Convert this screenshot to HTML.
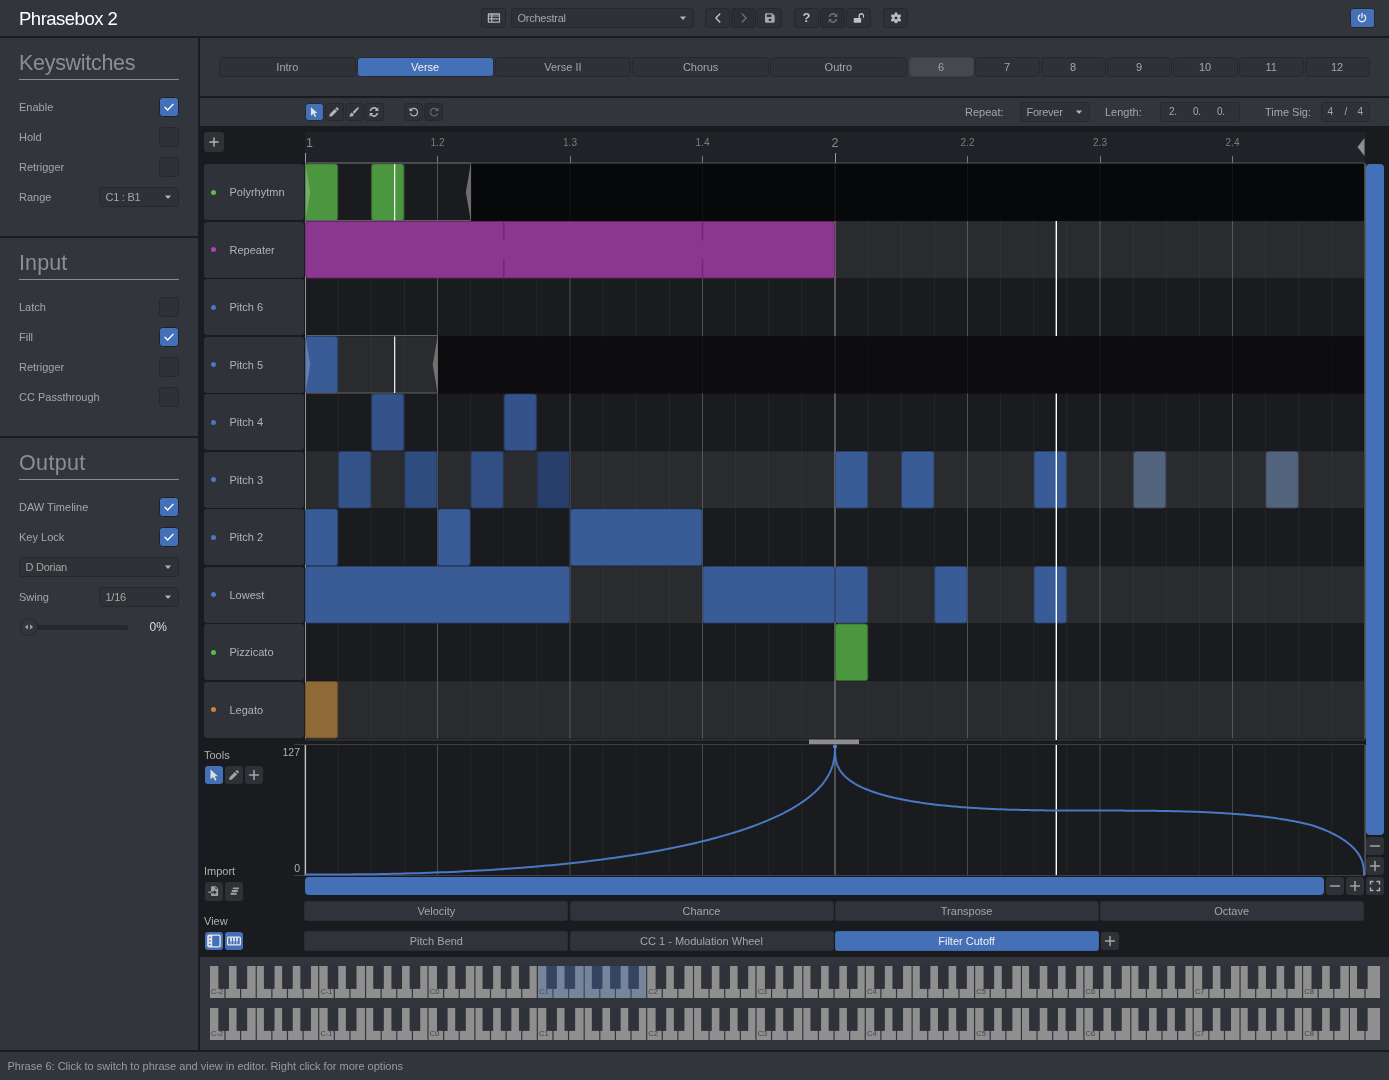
<!DOCTYPE html>
<html lang="en"><head><meta charset="utf-8"><title>Phrasebox 2</title>
<style>
html,body{margin:0;padding:0;}
body{will-change:transform;width:1389px;height:1080px;overflow:hidden;background:#32363c;position:relative;
 font-family:"Liberation Sans",sans-serif;font-size:11px;color:#a6a6a6;}
div,span{position:absolute;box-sizing:border-box;white-space:nowrap;}
svg{position:absolute;}
.btn{background:#2e3136;border:1px solid #25282c;border-radius:3.5px;}
.btn.dis{background:#2a2d32;}
.btn .ic,.sq .ic{left:50%;top:50%;transform:translate(-50%,-50%);}
.blue{background:#4470b8;border-color:#25282c;}
.sq{background:#2e3136;border-radius:3px;}
.ctr{display:flex;align-items:center;justify-content:center;}
.lbl{line-height:20px;height:20px;}
.h1{font-size:21.500px;color:#8e8e8e;line-height:26px;letter-spacing:-0.300px;}
.ul{height:1px;background:#8c8c8c;left:19px;width:160px;}
.cb{width:19.500px;height:19.500px;left:159.300px;background:#2e3136;border:1px solid #25282c;border-radius:3.500px;}
.cb.on{background:#4470b8;border-color:#1f2125;}
.cb .ic{left:50%;top:50%;transform:translate(-50%,-50%);}
.dd{background:#2e3136;border:1px solid #25282c;border-radius:3.500px;line-height:18px;padding-left:5.500px;letter-spacing:-0.250px;}
.dd .ic{right:5px;top:50%;transform:translateY(-50%);}
.tl{background:#2f3238;border-radius:3px;left:204px;width:99.500px;line-height:56px;padding-left:25.500px;color:#b2b2b2;}
.dot{width:5px;height:5px;border-radius:50%;left:6.500px;top:50%;margin-top:-2.500px;}
.note{border-radius:3.500px;}
.ph{width:1.500px;background:#fff;}
.sep{background:#191b1f;}
</style></head><body>

<div class="sep" style="left:0px;top:36px;width:1389px;height:2px;"></div>
<div class="sep" style="left:198px;top:36px;width:2px;height:1016px;"></div>
<div class="sep" style="left:0px;top:236px;width:198px;height:2px;"></div>
<div class="sep" style="left:0px;top:436px;width:198px;height:2px;"></div>
<div class="sep" style="left:200px;top:96px;width:1189px;height:2px;"></div>
<div class="sep" style="left:0px;top:1050px;width:1389px;height:2px;"></div>
<div style="left:200px;top:126px;width:1189px;height:831px;background:#191b1f;"></div>
<div style="left:19px;top:7px;font-size:18.500px;color:#fff;line-height:24px;letter-spacing:-0.500px;">Phrasebox 2</div>
<div class="btn" style="left:481px;top:8px;width:25px;height:19.5px;"><svg class="ic" width="13.5" height="13.5" viewBox="0 0 16 16" fill="#b4b4b4" color="#b4b4b4"><path d="M1.5 2.5h13a1 1 0 0 1 1 1v9a1 1 0 0 1-1 1h-13a1 1 0 0 1-1-1v-9a1 1 0 0 1 1-1zM2 6.2v2h2.6v-2zm4.1 0v2H14v-2zM2 9.7v2.3h2.6V9.7zm4.1 0v2.3H14V9.7zM2 4v.9h2.6V4zm4.1 0v.9H14V4z" fill-rule="evenodd"/></svg></div>
<div class="dd" style="left:511px;top:8px;width:182.500px;height:19.500px;">Orchestral<svg class="ic" width="10" height="10" viewBox="0 0 16 16" fill="#b4b4b4" color="#b4b4b4"><path d="M3 5.5h10L8 11z"/></svg></div>
<div class="btn" style="left:705px;top:8px;width:25px;height:19.5px;"><svg class="ic" width="11.5" height="11.5" viewBox="0 0 16 16" fill="#c4c4c4" color="#c4c4c4"><path d="M10.5 2.5L5 8l5.5 5.5" fill="none" stroke="currentColor" stroke-width="2" stroke-linecap="round" stroke-linejoin="round"/></svg></div>
<div class="btn dis" style="left:731px;top:8px;width:25px;height:19.5px;"><svg class="ic" width="11.5" height="11.5" viewBox="0 0 16 16" fill="#6c6c6c" color="#6c6c6c"><path d="M5.5 2.5L11 8l-5.500 5.5" fill="none" stroke="currentColor" stroke-width="2" stroke-linecap="round" stroke-linejoin="round"/></svg></div>
<div class="btn" style="left:757px;top:8px;width:25px;height:19.5px;"><svg class="ic" width="11.5" height="11.5" viewBox="0 0 16 16" fill="#a8a8a8" color="#a8a8a8"><path d="M2.500 1.500h8.700l3.300 3.300v8.200a1.500 1.500 0 0 1-1.500 1.500h-10.500a1.500 1.500 0 0 1-1.500-1.500v-10a1.500 1.500 0 0 1 1.500-1.500zM3.500 3.300v3.200h6.500v-3.200zM8 8.600a2 2 0 1 0 .001 0z" fill-rule="evenodd"/></svg></div>
<div class="btn" style="left:794px;top:8px;width:25px;height:19.5px;"><span style="left:0;right:0;top:0;line-height:18px;text-align:center;font-weight:bold;font-size:13px;color:#c4c4c4;">?</span></div>
<div class="btn dis" style="left:820px;top:8px;width:25px;height:19.5px;"><svg class="ic" width="11" height="11" viewBox="0 0 16 16" fill="#6c6c6c" color="#6c6c6c"><path d="M14.300 1.200v5.200h-5.200l1.900-1.900a4.200 4.200 0 0 0-7 1.900h-2.400a6.500 6.500 0 0 1 11.050-3.550zM1.700 14.800v-5.200h5.200l-1.900 1.900a4.200 4.200 0 0 0 7-1.900h2.400a6.500 6.500 0 0 1-11.050 3.550z"/></svg></div>
<div class="btn" style="left:846px;top:8px;width:25px;height:19.5px;"><svg class="ic" width="11.5" height="11.5" viewBox="0 0 16 16" fill="#c0c0c0" color="#c0c0c0"><path d="M1.500 8h8.500a1 1 0 0 1 1 1v4.500a1 1 0 0 1-1 1h-8.500a1 1 0 0 1-1-1v-4.500a1 1 0 0 1 1-1z"/><path d="M8.300 8v-2.800a3.100 3.100 0 0 1 6.200 0v1.800" fill="none" stroke="currentColor" stroke-width="1.900" stroke-linecap="round"/></svg></div>
<div class="btn" style="left:883px;top:8px;width:25px;height:19.5px;"><svg class="ic" width="11.5" height="11.5" viewBox="0 0 16 16" fill="#c0c0c0" color="#c0c0c0"><path d="M6.69 0.72 L9.31 0.72 L9.48 2.91 L11.67 4.17 L13.65 3.22 L14.96 5.49 L13.15 6.74 L13.15 9.26 L14.96 10.51 L13.65 12.78 L11.67 11.83 L9.48 13.09 L9.31 15.28 L6.69 15.28 L6.52 13.09 L4.33 11.83 L2.35 12.78 L1.04 10.51 L2.85 9.26 L2.85 6.74 L1.04 5.49 L2.35 3.22 L4.33 4.17 L6.52 2.91ZM8 5.600a2.400 2.400 0 1 0 .001 0z" fill-rule="evenodd" stroke="currentColor" stroke-width="0.8" stroke-linejoin="round"/></svg></div>
<div class="btn blue" style="left:1350.2px;top:8px;width:24.5px;height:19.8px;border-radius:3px;"><svg class="ic" width="11" height="11" viewBox="0 0 16 16" fill="#e6e6e6" color="#e6e6e6"><path d="M8 1.500v6" fill="none" stroke="currentColor" stroke-width="2" stroke-linecap="round"/><path d="M4.700 3.800a5.400 5.400 0 1 0 6.600 0" fill="none" stroke="currentColor" stroke-width="1.900" stroke-linecap="round"/></svg></div>
<div class="h1" style="left:19px;top:49.5px;letter-spacing:-0.3px;">Keyswitches</div>
<div class="ul" style="top:79px;"></div>
<div class="lbl" style="left:19px;top:97px;">Enable</div>
<div class="cb on" style="top:97px;"><svg class="ic" width="13" height="13" viewBox="0 0 16 16" fill="#b4b4b4" color="#b4b4b4"><path d="M3 8.300l3.300 3.400 6.800-7" fill="none" stroke="#fff" stroke-width="1.600" stroke-linecap="round" stroke-linejoin="round"/></svg></div>
<div class="lbl" style="left:19px;top:127px;">Hold</div>
<div class="cb" style="top:127px;"></div>
<div class="lbl" style="left:19px;top:157px;">Retrigger</div>
<div class="cb" style="top:157px;"></div>
<div class="lbl" style="left:19px;top:187px;">Range</div>
<div class="dd" style="left:99px;top:187px;width:79.500px;height:19.500px;">C1 : B1<svg class="ic" width="10" height="10" viewBox="0 0 16 16" fill="#b4b4b4" color="#b4b4b4"><path d="M3 5.5h10L8 11z"/></svg></div>
<div class="h1" style="left:19px;top:249.5px;letter-spacing:0.1px;">Input</div>
<div class="ul" style="top:279px;"></div>
<div class="lbl" style="left:19px;top:297px;">Latch</div>
<div class="cb" style="top:297px;"></div>
<div class="lbl" style="left:19px;top:327px;">Fill</div>
<div class="cb on" style="top:327px;"><svg class="ic" width="13" height="13" viewBox="0 0 16 16" fill="#b4b4b4" color="#b4b4b4"><path d="M3 8.300l3.300 3.400 6.800-7" fill="none" stroke="#fff" stroke-width="1.600" stroke-linecap="round" stroke-linejoin="round"/></svg></div>
<div class="lbl" style="left:19px;top:357px;">Retrigger</div>
<div class="cb" style="top:357px;"></div>
<div class="lbl" style="left:19px;top:387px;">CC Passthrough</div>
<div class="cb" style="top:387px;"></div>
<div class="h1" style="left:19px;top:449.5px;letter-spacing:0.35px;">Output</div>
<div class="ul" style="top:479px;"></div>
<div class="lbl" style="left:19px;top:497px;">DAW Timeline</div>
<div class="cb on" style="top:497px;"><svg class="ic" width="13" height="13" viewBox="0 0 16 16" fill="#b4b4b4" color="#b4b4b4"><path d="M3 8.300l3.300 3.400 6.800-7" fill="none" stroke="#fff" stroke-width="1.600" stroke-linecap="round" stroke-linejoin="round"/></svg></div>
<div class="lbl" style="left:19px;top:527px;">Key Lock</div>
<div class="cb on" style="top:527px;"><svg class="ic" width="13" height="13" viewBox="0 0 16 16" fill="#b4b4b4" color="#b4b4b4"><path d="M3 8.300l3.300 3.400 6.800-7" fill="none" stroke="#fff" stroke-width="1.600" stroke-linecap="round" stroke-linejoin="round"/></svg></div>
<div class="dd" style="left:19px;top:557px;width:159.500px;height:19.500px;">D Dorian<svg class="ic" width="10" height="10" viewBox="0 0 16 16" fill="#b4b4b4" color="#b4b4b4"><path d="M3 5.5h10L8 11z"/></svg></div>
<div class="lbl" style="left:19px;top:587px;">Swing</div>
<div class="dd" style="left:99px;top:587px;width:79.500px;height:19.500px;">1/16<svg class="ic" width="10" height="10" viewBox="0 0 16 16" fill="#b4b4b4" color="#b4b4b4"><path d="M3 5.5h10L8 11z"/></svg></div>
<div style="left:22px;top:624.5px;width:106px;height:5.5px;background:#25282c;border-radius:3px;"></div>
<div style="left:20px;top:618px;width:17.500px;height:17.500px;border-radius:50%;background:#32363c;border:1px solid #25282c;"><svg class="ic" style="left:50%;top:50%;transform:translate(-50%,-50%);" width="11" height="11" viewBox="0 0 16 16" fill="#a0a0a0" color="#a0a0a0"><path d="M6.500 4.500v7l-4.500-3.500zM9.500 4.500v7l4.500-3.500z"/></svg></div>
<div class="lbl" style="left:149.500px;top:617px;font-size:12px;color:#dcdcdc;">0%</div>
<div class="btn ctr" style="left:219.00px;top:57px;width:136.750px;height:19.500px;">Intro</div>
<div class="btn ctr" style="left:356.75px;top:57px;width:136.750px;height:19.500px;background:#4470b8;border-color:#25282c;color:#f0f0f0;">Verse</div>
<div class="btn ctr" style="left:494.50px;top:57px;width:136.750px;height:19.500px;">Verse II</div>
<div class="btn ctr" style="left:632.25px;top:57px;width:136.750px;height:19.500px;">Chorus</div>
<div class="btn ctr" style="left:770.00px;top:57px;width:136.750px;height:19.500px;">Outro</div>
<div class="btn ctr" style="left:908.5px;top:57px;width:65.200px;height:19.500px;background:#45484e;border-color:#3a3d42;">6</div>
<div class="btn ctr" style="left:974.5px;top:57px;width:65.200px;height:19.500px;">7</div>
<div class="btn ctr" style="left:1040.5px;top:57px;width:65.200px;height:19.500px;">8</div>
<div class="btn ctr" style="left:1106.5px;top:57px;width:65.200px;height:19.500px;">9</div>
<div class="btn ctr" style="left:1172.5px;top:57px;width:65.200px;height:19.500px;">10</div>
<div class="btn ctr" style="left:1238.5px;top:57px;width:65.200px;height:19.500px;">11</div>
<div class="btn ctr" style="left:1304.5px;top:57px;width:65.200px;height:19.500px;">12</div>
<div class="btn blue" style="left:304.5px;top:102.5px;width:19px;height:18.5px;"><svg class="ic" width="11" height="11" viewBox="0 0 16 16" fill="#e4e4e4" color="#e4e4e4"><path d="M3.500 1l9.500 8.600h-4.100l2.300 4.700-1.900.9-2.300-4.800-3.500 3z"/></svg></div>
<div class="btn" style="left:324.5px;top:102.5px;width:19px;height:18.5px;"><svg class="ic" width="11" height="11" viewBox="0 0 16 16" fill="#b4b4b4" color="#b4b4b4"><path d="M11.300 1.600a1.200 1.200 0 0 1 1.700 0l1.400 1.400a1.200 1.200 0 0 1 0 1.700l-1.300 1.300-3.100-3.100zM9.200 3.700l3.100 3.100-7.300 7.300-3.900.8.800-3.900z"/></svg></div>
<div class="btn" style="left:344.5px;top:102.5px;width:19px;height:18.5px;"><svg class="ic" width="11" height="11" viewBox="0 0 16 16" fill="#b4b4b4" color="#b4b4b4"><path d="M14.800 1.200c.6.600.300 1.500-.2 2.100l-6.200 7.200-2.400-2.400 6.900-6.500c.6-.6 1.400-.9 1.900-.4zM5.200 9l2.300 2.300c.1 2-1.500 3.300-3.300 3.300-1.300 0-2.500-.4-3.400-1.300 1.400-.1 1.700-.9 1.800-2 .1-1.400 1.200-2.400 2.600-2.300z"/></svg></div>
<div class="btn" style="left:364.5px;top:102.5px;width:19px;height:18.5px;"><svg class="ic" width="11" height="11" viewBox="0 0 16 16" fill="#b4b4b4" color="#b4b4b4"><path d="M14.300 1.200v5.200h-5.200l1.900-1.900a4.200 4.200 0 0 0-7 1.900h-2.400a6.500 6.500 0 0 1 11.050-3.550zM1.700 14.800v-5.200h5.200l-1.900 1.900a4.200 4.200 0 0 0 7-1.900h2.400a6.500 6.500 0 0 1-11.050 3.550z"/></svg></div>
<div class="btn" style="left:404px;top:102.5px;width:19px;height:18.5px;"><svg class="ic" width="11" height="11" viewBox="0 0 16 16" fill="#b4b4b4" color="#b4b4b4"><path d="M3.300 5.200a5.400 5.400 0 1 1-.4 5.300" fill="none" stroke="currentColor" stroke-width="1.800" stroke-linecap="round"/><path d="M1.200 1.800l.3 5.200 5.200-.4z"/></svg></div>
<div class="btn dis" style="left:424px;top:102.5px;width:19px;height:18.5px;"><svg class="ic" width="11" height="11" viewBox="0 0 16 16" fill="#666" color="#666"><path d="M12.700 5.200a5.400 5.400 0 1 0 .4 5.300" fill="none" stroke="currentColor" stroke-width="1.800" stroke-linecap="round"/><path d="M14.800 1.800l-.3 5.200-5.200-.4z"/></svg></div>
<div class="lbl" style="left:965px;top:102px;">Repeat:</div>
<div class="dd" style="left:1020px;top:102px;width:70px;height:19.500px;">Forever<svg class="ic" width="10" height="10" viewBox="0 0 16 16" fill="#b4b4b4" color="#b4b4b4"><path d="M3 5.5h10L8 11z"/></svg></div>
<div class="lbl" style="left:1105px;top:102px;">Length:</div>
<div class="dd" style="left:1160px;top:102px;width:79.500px;height:19.500px;font-size:10px;padding:0;"><span style="left:8px;top:0;">2.</span><span style="left:32px;top:0;">0.</span><span style="left:56px;top:0;">0.</span></div>
<div class="lbl" style="left:1265px;top:102px;">Time Sig:</div>
<div class="dd" style="left:1320.500px;top:102px;width:49px;height:19.500px;font-size:10px;padding:0;"><span style="left:6px;top:0;">4</span><span style="left:23px;top:0;">/</span><span style="left:36px;top:0;">4</span></div>
<div class="sq" style="left:204px;top:132px;width:19.5px;height:19.5px;"><svg class="ic" width="12" height="12" viewBox="0 0 16 16" fill="#b4b4b4" color="#b4b4b4"><path d="M8 2.500v11M2.500 8h11" fill="none" stroke="currentColor" stroke-width="1.900" stroke-linecap="round"/></svg></div>
<div style="left:305px;top:132px;width:1059.5px;height:31px;background:#1f2226;"></div>
<div style="left:305.0px;top:153px;width:1px;height:10px;background:#9a9a9a;"></div>
<div style="left:306px;top:135px;line-height:16px;font-size:12.500px;color:#8c8c8c;">1</div>
<div style="left:437.0px;top:156px;width:1px;height:7px;background:#7a7a7a;"></div>
<div style="left:417.5px;width:40px;text-align:center;top:135px;line-height:16px;font-size:10px;color:#7c7c7c;">1.2</div>
<div style="left:569.5px;top:156px;width:1px;height:7px;background:#7a7a7a;"></div>
<div style="left:550.0px;width:40px;text-align:center;top:135px;line-height:16px;font-size:10px;color:#7c7c7c;">1.3</div>
<div style="left:702.0px;top:156px;width:1px;height:7px;background:#7a7a7a;"></div>
<div style="left:682.5px;width:40px;text-align:center;top:135px;line-height:16px;font-size:10px;color:#7c7c7c;">1.4</div>
<div style="left:834.5px;top:153px;width:1px;height:10px;background:#9a9a9a;"></div>
<div style="left:815.0px;width:40px;text-align:center;top:135px;line-height:16px;font-size:12.500px;color:#8c8c8c;">2</div>
<div style="left:967.0px;top:156px;width:1px;height:7px;background:#7a7a7a;"></div>
<div style="left:947.5px;width:40px;text-align:center;top:135px;line-height:16px;font-size:10px;color:#7c7c7c;">2.2</div>
<div style="left:1099.5px;top:156px;width:1px;height:7px;background:#7a7a7a;"></div>
<div style="left:1080.0px;width:40px;text-align:center;top:135px;line-height:16px;font-size:10px;color:#7c7c7c;">2.3</div>
<div style="left:1232.0px;top:156px;width:1px;height:7px;background:#7a7a7a;"></div>
<div style="left:1212.5px;width:40px;text-align:center;top:135px;line-height:16px;font-size:10px;color:#7c7c7c;">2.4</div>
<svg style="left:1357px;top:138px;" width="8" height="18" viewBox="0 0 8 18"><path d="M7.500 0v18L0.500 9z" fill="#8e8e8e"/></svg>
<svg style="left:0;top:0;" width="1389" height="960" viewBox="0 0 1389 960" shape-rendering="auto"><rect x="305.0" y="163.50" width="1059.5" height="57.50" fill="#191b1f"/><rect x="305.0" y="221.00" width="1059.5" height="57.50" fill="#2a2b2f"/><rect x="305.0" y="278.50" width="1059.5" height="57.50" fill="#191b1f"/><rect x="305.0" y="336.00" width="1059.5" height="57.50" fill="#2a2b2f"/><rect x="305.0" y="393.50" width="1059.5" height="57.50" fill="#191b1f"/><rect x="305.0" y="451.00" width="1059.5" height="57.50" fill="#2a2b2f"/><rect x="305.0" y="508.50" width="1059.5" height="57.50" fill="#191b1f"/><rect x="305.0" y="566.00" width="1059.5" height="57.50" fill="#2a2b2f"/><rect x="305.0" y="623.50" width="1059.5" height="57.50" fill="#191b1f"/><rect x="305.0" y="681.00" width="1059.5" height="57.50" fill="#2a2b2f"/><rect x="470.62" y="163.50" width="893.88" height="57.5" fill="#07080a"/><rect x="437.50" y="336.00" width="927.00" height="57.5" fill="#0d0e10"/><rect x="305.0" y="220.50" width="1059.5" height="1" fill="#1a1c20" opacity="0.55"/><rect x="305.0" y="278.00" width="1059.5" height="1" fill="#1a1c20" opacity="0.55"/><rect x="305.0" y="335.50" width="1059.5" height="1" fill="#1a1c20" opacity="0.55"/><rect x="305.0" y="393.00" width="1059.5" height="1" fill="#1a1c20" opacity="0.55"/><rect x="305.0" y="450.50" width="1059.5" height="1" fill="#1a1c20" opacity="0.55"/><rect x="305.0" y="508.00" width="1059.5" height="1" fill="#1a1c20" opacity="0.55"/><rect x="305.0" y="565.50" width="1059.5" height="1" fill="#1a1c20" opacity="0.55"/><rect x="305.0" y="623.00" width="1059.5" height="1" fill="#1a1c20" opacity="0.55"/><rect x="305.0" y="680.50" width="1059.5" height="1" fill="#1a1c20" opacity="0.55"/><rect x="305.00" y="163.5" width="1" height="575.0" fill="#b4b4b4" opacity="0.8"/><rect x="304.50" y="745" width="1" height="130" fill="#b4b4b4" opacity="0.72"/><rect x="337.62" y="163.5" width="1" height="575.0" fill="#8a8a8a" opacity="0.11"/><rect x="337.62" y="745" width="1" height="130" fill="#8a8a8a" opacity="0.10"/><rect x="370.75" y="163.5" width="1" height="575.0" fill="#8a8a8a" opacity="0.11"/><rect x="370.75" y="745" width="1" height="130" fill="#8a8a8a" opacity="0.10"/><rect x="403.88" y="163.5" width="1" height="575.0" fill="#8a8a8a" opacity="0.11"/><rect x="403.88" y="745" width="1" height="130" fill="#8a8a8a" opacity="0.10"/><rect x="437.00" y="163.5" width="1" height="575.0" fill="#8c8c8c" opacity="0.47"/><rect x="437.00" y="745" width="1" height="130" fill="#8c8c8c" opacity="0.42"/><rect x="470.12" y="163.5" width="1" height="575.0" fill="#8a8a8a" opacity="0.11"/><rect x="470.12" y="745" width="1" height="130" fill="#8a8a8a" opacity="0.10"/><rect x="503.25" y="163.5" width="1" height="575.0" fill="#8a8a8a" opacity="0.11"/><rect x="503.25" y="745" width="1" height="130" fill="#8a8a8a" opacity="0.10"/><rect x="536.38" y="163.5" width="1" height="575.0" fill="#8a8a8a" opacity="0.11"/><rect x="536.38" y="745" width="1" height="130" fill="#8a8a8a" opacity="0.10"/><rect x="569.50" y="163.5" width="1" height="575.0" fill="#8c8c8c" opacity="0.47"/><rect x="569.50" y="745" width="1" height="130" fill="#8c8c8c" opacity="0.42"/><rect x="602.62" y="163.5" width="1" height="575.0" fill="#8a8a8a" opacity="0.11"/><rect x="602.62" y="745" width="1" height="130" fill="#8a8a8a" opacity="0.10"/><rect x="635.75" y="163.5" width="1" height="575.0" fill="#8a8a8a" opacity="0.11"/><rect x="635.75" y="745" width="1" height="130" fill="#8a8a8a" opacity="0.10"/><rect x="668.88" y="163.5" width="1" height="575.0" fill="#8a8a8a" opacity="0.11"/><rect x="668.88" y="745" width="1" height="130" fill="#8a8a8a" opacity="0.10"/><rect x="702.00" y="163.5" width="1" height="575.0" fill="#8c8c8c" opacity="0.47"/><rect x="702.00" y="745" width="1" height="130" fill="#8c8c8c" opacity="0.42"/><rect x="735.12" y="163.5" width="1" height="575.0" fill="#8a8a8a" opacity="0.11"/><rect x="735.12" y="745" width="1" height="130" fill="#8a8a8a" opacity="0.10"/><rect x="768.25" y="163.5" width="1" height="575.0" fill="#8a8a8a" opacity="0.11"/><rect x="768.25" y="745" width="1" height="130" fill="#8a8a8a" opacity="0.10"/><rect x="801.38" y="163.5" width="1" height="575.0" fill="#8a8a8a" opacity="0.11"/><rect x="801.38" y="745" width="1" height="130" fill="#8a8a8a" opacity="0.10"/><rect x="834.50" y="163.5" width="1" height="575.0" fill="#b4b4b4" opacity="0.8"/><rect x="834.50" y="745" width="1" height="130" fill="#b4b4b4" opacity="0.72"/><rect x="867.62" y="163.5" width="1" height="575.0" fill="#8a8a8a" opacity="0.11"/><rect x="867.62" y="745" width="1" height="130" fill="#8a8a8a" opacity="0.10"/><rect x="900.75" y="163.5" width="1" height="575.0" fill="#8a8a8a" opacity="0.11"/><rect x="900.75" y="745" width="1" height="130" fill="#8a8a8a" opacity="0.10"/><rect x="933.88" y="163.5" width="1" height="575.0" fill="#8a8a8a" opacity="0.11"/><rect x="933.88" y="745" width="1" height="130" fill="#8a8a8a" opacity="0.10"/><rect x="967.00" y="163.5" width="1" height="575.0" fill="#8c8c8c" opacity="0.47"/><rect x="967.00" y="745" width="1" height="130" fill="#8c8c8c" opacity="0.42"/><rect x="1000.12" y="163.5" width="1" height="575.0" fill="#8a8a8a" opacity="0.11"/><rect x="1000.12" y="745" width="1" height="130" fill="#8a8a8a" opacity="0.10"/><rect x="1033.25" y="163.5" width="1" height="575.0" fill="#8a8a8a" opacity="0.11"/><rect x="1033.25" y="745" width="1" height="130" fill="#8a8a8a" opacity="0.10"/><rect x="1066.38" y="163.5" width="1" height="575.0" fill="#8a8a8a" opacity="0.11"/><rect x="1066.38" y="745" width="1" height="130" fill="#8a8a8a" opacity="0.10"/><rect x="1099.50" y="163.5" width="1" height="575.0" fill="#8c8c8c" opacity="0.47"/><rect x="1099.50" y="745" width="1" height="130" fill="#8c8c8c" opacity="0.42"/><rect x="1132.62" y="163.5" width="1" height="575.0" fill="#8a8a8a" opacity="0.11"/><rect x="1132.62" y="745" width="1" height="130" fill="#8a8a8a" opacity="0.10"/><rect x="1165.75" y="163.5" width="1" height="575.0" fill="#8a8a8a" opacity="0.11"/><rect x="1165.75" y="745" width="1" height="130" fill="#8a8a8a" opacity="0.10"/><rect x="1198.88" y="163.5" width="1" height="575.0" fill="#8a8a8a" opacity="0.11"/><rect x="1198.88" y="745" width="1" height="130" fill="#8a8a8a" opacity="0.10"/><rect x="1232.00" y="163.5" width="1" height="575.0" fill="#8c8c8c" opacity="0.47"/><rect x="1232.00" y="745" width="1" height="130" fill="#8c8c8c" opacity="0.42"/><rect x="1265.12" y="163.5" width="1" height="575.0" fill="#8a8a8a" opacity="0.11"/><rect x="1265.12" y="745" width="1" height="130" fill="#8a8a8a" opacity="0.10"/><rect x="1298.25" y="163.5" width="1" height="575.0" fill="#8a8a8a" opacity="0.11"/><rect x="1298.25" y="745" width="1" height="130" fill="#8a8a8a" opacity="0.10"/><rect x="1331.38" y="163.5" width="1" height="575.0" fill="#8a8a8a" opacity="0.11"/><rect x="1331.38" y="745" width="1" height="130" fill="#8a8a8a" opacity="0.10"/><rect x="1364.50" y="163.5" width="1" height="575.0" fill="#b4b4b4" opacity="0.8"/><rect x="1364.50" y="745" width="1" height="130" fill="#b4b4b4" opacity="0.72"/><rect x="471.23" y="163.50" width="892.88" height="57.5" fill="#07080a" opacity="0.82"/><rect x="438.10" y="336.00" width="926.00" height="57.5" fill="#0d0e10" opacity="0.82"/><rect x="305.40" y="164.00" width="32.23" height="56.50" rx="2.6" fill="#4d9640" stroke="#376c2e" stroke-width="0.8" opacity="1.0"/><rect x="371.65" y="164.00" width="32.23" height="56.50" rx="2.6" fill="#4d9640" stroke="#376c2e" stroke-width="0.8" opacity="1.0"/><rect x="305.40" y="221.50" width="529.10" height="56.50" rx="2.6" fill="#8b368f" stroke="#642666" stroke-width="0.8" opacity="1.0"/><rect x="305.40" y="336.50" width="32.23" height="56.50" rx="2.6" fill="#3a5c96" stroke="#29426c" stroke-width="0.8" opacity="1.0"/><rect x="371.65" y="394.00" width="32.23" height="56.50" rx="2.6" fill="#34538a" stroke="#253b63" stroke-width="0.8" opacity="1.0"/><rect x="504.15" y="394.00" width="32.23" height="56.50" rx="2.6" fill="#34538a" stroke="#253b63" stroke-width="0.8" opacity="1.0"/><rect x="338.52" y="451.50" width="32.23" height="56.50" rx="2.6" fill="#335389" stroke="#243b62" stroke-width="0.8" opacity="1.0"/><rect x="404.77" y="451.50" width="32.23" height="56.50" rx="2.6" fill="#2e4c7e" stroke="#21365a" stroke-width="0.8" opacity="1.0"/><rect x="471.02" y="451.50" width="32.23" height="56.50" rx="2.6" fill="#314f82" stroke="#23385d" stroke-width="0.8" opacity="1.0"/><rect x="537.27" y="451.50" width="32.23" height="56.50" rx="2.6" fill="#283f6b" stroke="#1c2d4d" stroke-width="0.8" opacity="1.0"/><rect x="835.40" y="451.50" width="32.23" height="56.50" rx="2.6" fill="#3a5c96" stroke="#29426c" stroke-width="0.8" opacity="1.0"/><rect x="901.65" y="451.50" width="32.23" height="56.50" rx="2.6" fill="#3a5c96" stroke="#29426c" stroke-width="0.8" opacity="1.0"/><rect x="1034.15" y="451.50" width="32.23" height="56.50" rx="2.6" fill="#3a5c96" stroke="#29426c" stroke-width="0.8" opacity="1.0"/><rect x="1133.53" y="451.50" width="32.23" height="56.50" rx="2.6" fill="#52637d" stroke="#3b475a" stroke-width="0.8" opacity="1.0"/><rect x="1266.03" y="451.50" width="32.23" height="56.50" rx="2.6" fill="#52637d" stroke="#3b475a" stroke-width="0.8" opacity="1.0"/><rect x="305.40" y="509.00" width="32.23" height="56.50" rx="2.6" fill="#3a5c96" stroke="#29426c" stroke-width="0.8" opacity="1.0"/><rect x="437.90" y="509.00" width="32.23" height="56.50" rx="2.6" fill="#3a5c96" stroke="#29426c" stroke-width="0.8" opacity="1.0"/><rect x="570.40" y="509.00" width="131.60" height="56.50" rx="2.6" fill="#3a5c96" stroke="#29426c" stroke-width="0.8" opacity="1.0"/><rect x="305.40" y="566.50" width="264.10" height="56.50" rx="2.6" fill="#3a5c96" stroke="#29426c" stroke-width="0.8" opacity="1.0"/><rect x="702.90" y="566.50" width="131.60" height="56.50" rx="2.6" fill="#3a5c96" stroke="#29426c" stroke-width="0.8" opacity="1.0"/><rect x="835.40" y="566.50" width="32.23" height="56.50" rx="2.6" fill="#3a5c96" stroke="#29426c" stroke-width="0.8" opacity="1.0"/><rect x="934.77" y="566.50" width="32.23" height="56.50" rx="2.6" fill="#3a5c96" stroke="#29426c" stroke-width="0.8" opacity="1.0"/><rect x="1034.15" y="566.50" width="32.23" height="56.50" rx="2.6" fill="#3a5c96" stroke="#29426c" stroke-width="0.8" opacity="1.0"/><rect x="835.40" y="624.00" width="32.23" height="56.50" rx="2.6" fill="#4d9640" stroke="#376c2e" stroke-width="0.8" opacity="1.0"/><rect x="305.40" y="681.50" width="32.23" height="56.50" rx="2.6" fill="#8f6a36" stroke="#664c26" stroke-width="0.8" opacity="1.0"/><rect x="503.00" y="222.00" width="1.500" height="18.5" fill="#6f2a73"/><rect x="503.00" y="259.00" width="1.500" height="18.5" fill="#6f2a73"/><rect x="701.75" y="222.00" width="1.500" height="18.5" fill="#6f2a73"/><rect x="701.75" y="259.00" width="1.500" height="18.5" fill="#6f2a73"/><path d="M305.00 163.00 H470.62 V220.50 H305.00" fill="none" stroke="#606060" stroke-width="1"/><path d="M305.50 164.50 L310.20 192.25 L305.50 220.00Z" fill="#fff" opacity="0.22"/><path d="M470.62 164.50 L465.82 192.25 L470.62 220.00Z" fill="#8a8a8a" opacity="0.75"/><rect x="394.1" y="164.00" width="1.150" height="56.50" fill="#fff"/><path d="M305.00 335.50 H437.50 V393.00 H305.00" fill="none" stroke="#606060" stroke-width="1"/><path d="M305.50 337.00 L310.20 364.75 L305.50 392.50Z" fill="#fff" opacity="0.22"/><path d="M437.50 337.00 L432.70 364.75 L437.50 392.50Z" fill="#8a8a8a" opacity="0.75"/><rect x="394.1" y="336.50" width="1.150" height="56.50" fill="#fff"/><rect x="305.0" y="162.5" width="1059.5" height="1" fill="#55575a"/><rect x="1364.0" y="163" width="1" height="577" fill="#484a4e"/><rect x="305.0" y="739.5" width="1059.5" height="1" fill="#3c3e42"/><rect x="1055.6" y="221.00" width="1.400" height="115.00" fill="#fff"/><rect x="1055.6" y="393.50" width="1.400" height="346.50" fill="#fff"/><rect x="1055.6" y="744.50" width="1.400" height="130.50" fill="#fff"/><rect x="294" y="744" width="1071" height="1" fill="#3c3e42"/><rect x="294" y="875" width="1071" height="1" fill="#3c3e42"/><rect x="1364" y="744" width="1" height="132" fill="#3c3e42"/><rect x="305" y="745" width="1.100" height="130" fill="#c0c0c0"/><rect x="809" y="739.5" width="50" height="4.500" fill="#8e8e8e"/><path d="M305.00 874.60 L311.60 874.60 L318.17 874.59 L324.69 874.58 L331.17 874.55 L337.61 874.52 L344.00 874.48 L350.36 874.43 L356.68 874.37 L362.95 874.30 L369.18 874.22 L375.37 874.13 L381.52 874.02 L387.63 873.91 L393.69 873.78 L399.72 873.65 L405.70 873.50 L411.64 873.34 L417.54 873.17 L423.40 872.98 L429.22 872.79 L434.99 872.58 L440.73 872.36 L446.42 872.13 L452.08 871.89 L457.69 871.64 L463.25 871.37 L468.78 871.10 L474.27 870.81 L479.71 870.51 L485.12 870.20 L490.48 869.88 L495.80 869.54 L501.08 869.20 L506.32 868.84 L511.51 868.48 L516.67 868.10 L521.78 867.71 L526.85 867.31 L531.89 866.89 L536.88 866.47 L541.82 866.04 L546.73 865.59 L551.59 865.14 L556.42 864.67 L561.20 864.19 L565.94 863.71 L570.64 863.21 L575.30 862.70 L579.92 862.18 L584.49 861.65 L589.03 861.12 L593.52 860.57 L597.97 860.01 L602.38 859.44 L606.75 858.86 L611.07 858.27 L615.36 857.67 L619.60 857.06 L623.81 856.44 L627.97 855.81 L632.09 855.17 L636.17 854.53 L640.20 853.87 L644.20 853.20 L648.15 852.53 L652.07 851.84 L655.94 851.15 L659.77 850.44 L663.56 849.73 L667.30 849.01 L671.01 848.28 L674.67 847.54 L678.30 846.79 L681.88 846.03 L685.42 845.27 L688.92 844.49 L692.38 843.71 L695.79 842.92 L699.17 842.12 L702.50 841.31 L705.79 840.49 L709.04 839.66 L712.25 838.83 L715.42 837.98 L718.54 837.13 L721.63 836.27 L724.67 835.41 L727.68 834.53 L730.64 833.65 L733.55 832.76 L736.43 831.86 L739.27 830.95 L742.06 830.03 L744.82 829.11 L747.53 828.18 L750.20 827.24 L752.83 826.29 L755.42 825.34 L757.96 824.37 L760.47 823.40 L762.93 822.43 L765.35 821.44 L767.74 820.45 L770.08 819.45 L772.37 818.44 L774.63 817.42 L776.84 816.40 L779.02 815.37 L781.15 814.33 L783.24 813.28 L785.29 812.23 L787.30 811.16 L789.27 810.09 L791.19 809.02 L793.08 807.93 L794.92 806.84 L796.72 805.74 L798.48 804.63 L800.20 803.52 L801.88 802.39 L803.51 801.26 L805.10 800.12 L806.66 798.97 L808.17 797.82 L809.64 796.66 L811.07 795.48 L812.45 794.30 L813.80 793.12 L815.10 791.92 L816.37 790.71 L817.59 789.50 L818.77 788.27 L819.91 787.04 L821.00 785.80 L822.06 784.55 L823.08 783.29 L824.05 782.01 L824.98 780.73 L825.87 779.44 L826.72 778.13 L827.53 776.82 L828.29 775.49 L829.02 774.14 L829.70 772.79 L830.34 771.42 L830.94 770.03 L831.50 768.63 L832.02 767.21 L832.49 765.78 L832.93 764.32 L833.32 762.84 L833.67 761.33 L833.99 759.79 L834.25 758.22 L834.48 756.61 L834.67 754.95 L834.81 753.22 L834.92 751.41 L834.98 749.44 L835.00 747.00 L835.01 749.77 L835.04 751.47 L835.09 752.91 L835.17 754.21 L835.26 755.41 L835.37 756.53 L835.51 757.60 L835.66 758.62 L835.84 759.60 L836.03 760.55 L836.25 761.47 L836.49 762.36 L836.75 763.22 L837.03 764.07 L837.32 764.89 L837.64 765.70 L837.99 766.49 L838.35 767.26 L838.73 768.02 L839.13 768.77 L839.56 769.50 L840.00 770.22 L840.47 770.93 L840.95 771.63 L841.46 772.32 L841.98 773.00 L842.53 773.66 L843.10 774.32 L843.69 774.97 L844.30 775.61 L844.93 776.24 L845.58 776.86 L846.25 777.48 L846.94 778.08 L847.66 778.68 L848.39 779.28 L849.14 779.86 L849.92 780.44 L850.72 781.01 L851.53 781.57 L852.37 782.13 L853.23 782.68 L854.10 783.22 L855.00 783.76 L855.92 784.29 L856.86 784.81 L857.82 785.33 L858.80 785.84 L859.81 786.35 L860.83 786.85 L861.87 787.34 L862.94 787.83 L864.02 788.31 L865.13 788.79 L866.25 789.26 L867.40 789.72 L868.57 790.18 L869.76 790.64 L870.97 791.09 L872.20 791.53 L873.45 791.97 L874.72 792.40 L876.01 792.82 L877.32 793.24 L878.65 793.66 L880.01 794.07 L881.38 794.48 L882.78 794.87 L884.19 795.27 L885.63 795.66 L887.08 796.04 L888.56 796.42 L890.06 796.79 L891.58 797.16 L893.12 797.52 L894.68 797.88 L896.26 798.23 L897.86 798.58 L899.48 798.92 L901.12 799.26 L902.79 799.59 L904.47 799.92 L906.18 800.24 L907.90 800.56 L909.65 800.87 L911.42 801.17 L913.20 801.47 L915.01 801.77 L916.84 802.06 L918.69 802.34 L920.56 802.62 L922.45 802.90 L924.36 803.17 L926.29 803.43 L928.25 803.69 L930.22 803.95 L932.21 804.20 L934.23 804.44 L936.26 804.68 L938.32 804.92 L940.40 805.14 L942.49 805.37 L944.61 805.59 L946.75 805.80 L948.91 806.01 L951.09 806.21 L953.29 806.41 L955.51 806.61 L957.75 806.80 L960.02 806.98 L962.30 807.16 L964.61 807.33 L966.93 807.50 L969.28 807.66 L971.64 807.82 L974.03 807.98 L976.44 808.12 L978.86 808.27 L981.31 808.41 L983.78 808.54 L986.27 808.67 L988.78 808.80 L991.31 808.92 L993.87 809.03 L996.44 809.14 L999.03 809.25 L1001.65 809.35 L1004.28 809.45 L1006.94 809.54 L1009.61 809.63 L1012.31 809.71 L1015.03 809.79 L1017.76 809.86 L1020.52 809.93 L1023.30 810.00 L1026.10 810.06 L1028.92 810.12 L1031.76 810.18 L1034.63 810.23 L1037.51 810.27 L1040.41 810.31 L1043.34 810.35 L1046.28 810.39 L1049.24 810.42 L1052.23 810.45 L1055.24 810.48 L1058.26 810.50 L1061.31 810.52 L1064.38 810.54 L1067.47 810.55 L1070.58 810.56 L1073.71 810.57 L1076.86 810.58 L1080.03 810.59 L1083.23 810.59 L1086.44 810.60 L1089.67 810.60 L1092.93 810.60 L1096.20 810.60 L1099.50 810.60 L1102.80 810.60 L1106.07 810.60 L1109.33 810.60 L1112.56 810.60 L1115.77 810.61 L1118.97 810.61 L1122.14 810.62 L1125.29 810.63 L1128.42 810.64 L1131.53 810.65 L1134.62 810.66 L1137.69 810.68 L1140.74 810.70 L1143.76 810.72 L1146.77 810.75 L1149.75 810.78 L1152.72 810.81 L1155.66 810.85 L1158.59 810.89 L1161.49 810.93 L1164.37 810.98 L1167.24 811.03 L1170.08 811.08 L1172.90 811.14 L1175.70 811.20 L1178.48 811.27 L1181.24 811.34 L1183.97 811.42 L1186.69 811.50 L1189.39 811.58 L1192.06 811.67 L1194.72 811.76 L1197.35 811.86 L1199.97 811.96 L1202.56 812.07 L1205.13 812.18 L1207.69 812.29 L1210.22 812.41 L1212.73 812.54 L1215.22 812.67 L1217.69 812.81 L1220.14 812.95 L1222.56 813.09 L1224.97 813.24 L1227.36 813.40 L1229.72 813.56 L1232.07 813.72 L1234.39 813.89 L1236.70 814.06 L1238.98 814.24 L1241.25 814.43 L1243.49 814.62 L1245.71 814.81 L1247.91 815.01 L1250.09 815.22 L1252.25 815.43 L1254.39 815.64 L1256.51 815.86 L1258.60 816.09 L1260.68 816.32 L1262.74 816.56 L1264.77 816.80 L1266.79 817.04 L1268.78 817.29 L1270.75 817.55 L1272.71 817.81 L1274.64 818.08 L1276.55 818.35 L1278.44 818.63 L1280.31 818.91 L1282.16 819.19 L1283.99 819.49 L1285.80 819.78 L1287.58 820.09 L1289.35 820.39 L1291.10 820.71 L1292.82 821.03 L1294.53 821.35 L1296.21 821.68 L1297.88 822.01 L1299.52 822.35 L1301.14 822.69 L1302.74 823.04 L1304.32 823.40 L1305.88 823.76 L1307.42 824.12 L1308.94 824.49 L1310.44 824.87 L1311.92 825.30 L1313.37 825.77 L1314.81 826.25 L1316.22 826.73 L1317.62 827.22 L1318.99 827.72 L1320.35 828.23 L1321.68 828.74 L1322.99 829.25 L1324.28 829.78 L1325.55 830.31 L1326.80 830.84 L1328.03 831.38 L1329.24 831.93 L1330.43 832.48 L1331.60 833.04 L1332.75 833.60 L1333.87 834.17 L1334.98 834.74 L1336.06 835.32 L1337.13 835.91 L1338.17 836.50 L1339.19 837.09 L1340.19 837.69 L1341.18 838.29 L1342.14 838.90 L1343.08 839.51 L1344.00 840.13 L1344.90 840.75 L1345.77 841.38 L1346.63 842.01 L1347.47 842.64 L1348.28 843.28 L1349.08 843.93 L1349.86 844.57 L1350.61 845.23 L1351.34 845.88 L1352.06 846.54 L1352.75 847.21 L1353.42 847.88 L1354.07 848.55 L1354.70 849.23 L1355.31 849.91 L1355.90 850.60 L1356.47 851.29 L1357.02 851.99 L1357.54 852.69 L1358.05 853.40 L1358.53 854.11 L1359.00 854.83 L1359.44 855.55 L1359.87 856.28 L1360.27 857.02 L1360.65 857.76 L1361.01 858.52 L1361.36 859.28 L1361.68 860.04 L1361.97 860.82 L1362.25 861.61 L1362.51 862.41 L1362.75 863.22 L1362.97 864.05 L1363.16 864.89 L1363.34 865.76 L1363.49 866.64 L1363.63 867.55 L1363.74 868.49 L1363.83 869.48 L1363.91 870.51 L1363.96 871.63 L1363.99 872.87 L1364.00 874.60" fill="none" stroke="#4a78c4" stroke-width="2" stroke-linejoin="round" stroke-linecap="round"/><circle cx="835" cy="746.5" r="2" fill="#5a88d4"/></svg>
<div class="tl" style="top:164.20px;height:56.10px;"><span class="dot" style="background:#5dbb46;"></span>Polyrhytmn</div>
<div class="tl" style="top:221.70px;height:56.10px;"><span class="dot" style="background:#b53fba;"></span>Repeater</div>
<div class="tl" style="top:279.20px;height:56.10px;"><span class="dot" style="background:#4a78c8;"></span>Pitch 6</div>
<div class="tl" style="top:336.70px;height:56.10px;"><span class="dot" style="background:#4a78c8;"></span>Pitch 5</div>
<div class="tl" style="top:394.20px;height:56.10px;"><span class="dot" style="background:#4a78c8;"></span>Pitch 4</div>
<div class="tl" style="top:451.70px;height:56.10px;"><span class="dot" style="background:#4a78c8;"></span>Pitch 3</div>
<div class="tl" style="top:509.20px;height:56.10px;"><span class="dot" style="background:#4a78c8;"></span>Pitch 2</div>
<div class="tl" style="top:566.70px;height:56.10px;"><span class="dot" style="background:#4a78c8;"></span>Lowest</div>
<div class="tl" style="top:624.20px;height:56.10px;"><span class="dot" style="background:#5dbb46;"></span>Pizzicato</div>
<div class="tl" style="top:681.70px;height:56.10px;"><span class="dot" style="background:#c8863a;"></span>Legato</div>
<div style="left:1366px;top:164px;width:18px;height:670.5px;background:#4470b8;border-radius:4px;"></div>
<div class="sq" style="left:1366px;top:837px;width:18px;height:18px;"><svg class="ic" width="13" height="13" viewBox="0 0 16 16" fill="#a4a4a4" color="#a4a4a4"><path d="M2.500 8h11" fill="none" stroke="currentColor" stroke-width="1.900" stroke-linecap="round"/></svg></div>
<div class="sq" style="left:1366px;top:857px;width:18px;height:18px;"><svg class="ic" width="13" height="13" viewBox="0 0 16 16" fill="#a4a4a4" color="#a4a4a4"><path d="M8 2.500v11M2.500 8h11" fill="none" stroke="currentColor" stroke-width="1.900" stroke-linecap="round"/></svg></div>
<div class="sq" style="left:1366px;top:877px;width:18px;height:18px;"><svg class="ic" width="12" height="12" viewBox="0 0 16 16" fill="#b0b0b0" color="#b0b0b0"><path d="M2 6v-4h4M10 2h4v4M14 10v4h-4M6 14h-4v-4" fill="none" stroke="currentColor" stroke-width="1.900"/></svg></div>
<div style="left:305px;top:877px;width:1019px;height:18px;background:#4470b8;border-radius:4px;"></div>
<div class="sq" style="left:1326px;top:877px;width:18px;height:18px;"><svg class="ic" width="13" height="13" viewBox="0 0 16 16" fill="#a4a4a4" color="#a4a4a4"><path d="M2.500 8h11" fill="none" stroke="currentColor" stroke-width="1.900" stroke-linecap="round"/></svg></div>
<div class="sq" style="left:1346px;top:877px;width:18px;height:18px;"><svg class="ic" width="13" height="13" viewBox="0 0 16 16" fill="#a4a4a4" color="#a4a4a4"><path d="M8 2.500v11M2.500 8h11" fill="none" stroke="currentColor" stroke-width="1.900" stroke-linecap="round"/></svg></div>
<div class="lbl" style="left:204px;top:745px;color:#b0b0b0;">Tools</div>
<div class="sq" style="left:205px;top:766px;width:18px;height:18px;background:#4470b8;"><svg class="ic" width="12.5" height="12.5" viewBox="0 0 16 16" fill="#dedede" color="#dedede"><path d="M3.500 1l9.500 8.600h-4.100l2.300 4.700-1.900.9-2.300-4.800-3.500 3z"/></svg></div>
<div class="sq" style="left:225px;top:766px;width:18px;height:18px;"><svg class="ic" width="11.5" height="11.5" viewBox="0 0 16 16" fill="#a4a4a4" color="#a4a4a4"><path d="M11.300 1.600a1.200 1.200 0 0 1 1.700 0l1.400 1.400a1.200 1.200 0 0 1 0 1.700l-1.300 1.300-3.100-3.100zM9.200 3.700l3.100 3.100-7.300 7.300-3.900.8.800-3.900z"/></svg></div>
<div class="sq" style="left:245px;top:766px;width:18px;height:18px;"><svg class="ic" width="13" height="13" viewBox="0 0 16 16" fill="#a4a4a4" color="#a4a4a4"><path d="M8 2.500v11M2.500 8h11" fill="none" stroke="currentColor" stroke-width="1.900" stroke-linecap="round"/></svg></div>
<div class="lbl" style="left:204px;top:861px;color:#b0b0b0;">Import</div>
<div class="sq" style="left:204.7px;top:881.5px;width:18.5px;height:19px;"><svg class="ic" width="12" height="12" viewBox="0 0 16 16" fill="#a0a0a0" color="#a0a0a0"><path d="M5 1.500h5.200l3.300 3.300v8.700a1 1 0 0 1-1 1h-7.500a1 1 0 0 1-1-1v-2.600h4.200v2.100l3.500-3.200-3.500-3.200v2.100h-4.200v-6.200a1 1 0 0 1 1-1zM9.800 2.200v3h3z" fill-rule="evenodd"/><path d="M0.500 8.700h4v1.800h-4z"/></svg></div>
<div class="sq" style="left:224.7px;top:881.5px;width:18.5px;height:19px;"><svg class="ic" width="12" height="12" viewBox="0 0 16 16" fill="#a0a0a0" color="#a0a0a0"><path d="M6.500 3.200h8v2.500h-8zM5 6.800h8v2.500h-8zM3.500 10.400h8v2.500h-8z"/></svg></div>
<div class="lbl" style="left:204px;top:911px;color:#b0b0b0;">View</div>
<div class="sq" style="left:205px;top:932px;width:18px;height:18px;background:#4470b8;"><svg class="ic" width="14.5" height="14.5" viewBox="0 0 16 16" fill="#e8e8e8" color="#e8e8e8"><path d="M2.500 0.800h11a2 2 0 0 1 2 2v10.400a2 2 0 0 1-2 2h-11a2 2 0 0 1-2-2v-10.400a2 2 0 0 1 2-2zM6 2.300v11.400h7.500a.500.500 0 0 0 .500-.500v-10.400a.500.500 0 0 0-.500-.500zM2.300 3.200v1.900h1.900v-1.900zM2.300 7.050v1.900h1.900v-1.900zM2.300 10.900v1.900h1.900v-1.900z" fill-rule="evenodd"/></svg></div>
<div class="sq" style="left:225px;top:932px;width:18px;height:18px;background:#4470b8;"><svg class="ic" width="14.5" height="14.5" viewBox="0 0 16 16" fill="#e8e8e8" color="#e8e8e8"><rect x="1" y="3.600" width="14" height="8.800" rx="1" fill="none" stroke="currentColor" stroke-width="1.400"/><path d="M3.700 4h2v4.200h-2zM7 4h2v4.200h-2zM10.300 4h2v4.200h-2zM4.300 8h.800v4h-.800zM7.600 8h.800v4h-.800zM10.900 8h.800v4h-.800z"/></svg></div>
<div style="left:260px;width:40px;text-align:right;top:745px;line-height:14px;font-size:10.500px;color:#b0b0b0;">127</div>
<div style="left:260px;width:40px;text-align:right;top:861px;line-height:14px;font-size:10.500px;color:#b0b0b0;">0</div>
<div class="sq ctr" style="left:304.40px;top:901.400px;width:264px;height:19.300px;border:1px solid #2b2e33;border-radius:2.500px;background:#30333a;">Velocity</div>
<div class="sq ctr" style="left:569.50px;top:901.400px;width:264px;height:19.300px;border:1px solid #2b2e33;border-radius:2.500px;background:#30333a;">Chance</div>
<div class="sq ctr" style="left:834.60px;top:901.400px;width:264px;height:19.300px;border:1px solid #2b2e33;border-radius:2.500px;background:#30333a;">Transpose</div>
<div class="sq ctr" style="left:1099.70px;top:901.400px;width:264px;height:19.300px;border:1px solid #2b2e33;border-radius:2.500px;background:#30333a;">Octave</div>
<div class="sq ctr" style="left:304.40px;top:931.300px;width:264px;height:19.300px;border:1px solid #2b2e33;border-radius:2.500px;background:#30333a;">Pitch Bend</div>
<div class="sq ctr" style="left:569.50px;top:931.300px;width:264px;height:19.300px;border:1px solid #2b2e33;border-radius:2.500px;background:#30333a;">CC 1 - Modulation Wheel</div>
<div class="sq ctr" style="left:834.60px;top:931.300px;width:264px;height:19.300px;border:1px solid #2b2e33;border-radius:2.500px;background:#30333a;background:#4470b8;color:#f0f0f0;border-color:#3f68ab;">Filter Cutoff</div>
<div class="sq" style="left:1101px;top:932px;width:18px;height:18px;"><svg class="ic" width="13" height="13" viewBox="0 0 16 16" fill="#a4a4a4" color="#a4a4a4"><path d="M8 2.500v11M2.500 8h11" fill="none" stroke="currentColor" stroke-width="1.900" stroke-linecap="round"/></svg></div>
<svg style="left:0;top:957px;" width="1389" height="93" viewBox="0 957 1389 93"><rect x="210.00" y="966" width="14.4" height="32" fill="#8f8f8f"/><rect x="225.62" y="966" width="14.4" height="32" fill="#8f8f8f"/><rect x="241.23" y="966" width="14.4" height="32" fill="#8f8f8f"/><rect x="256.85" y="966" width="14.4" height="32" fill="#8f8f8f"/><rect x="272.46" y="966" width="14.4" height="32" fill="#8f8f8f"/><rect x="288.08" y="966" width="14.4" height="32" fill="#8f8f8f"/><rect x="303.70" y="966" width="14.4" height="32" fill="#8f8f8f"/><rect x="319.31" y="966" width="14.4" height="32" fill="#8f8f8f"/><rect x="334.93" y="966" width="14.4" height="32" fill="#8f8f8f"/><rect x="350.55" y="966" width="14.4" height="32" fill="#8f8f8f"/><rect x="366.16" y="966" width="14.4" height="32" fill="#8f8f8f"/><rect x="381.78" y="966" width="14.4" height="32" fill="#8f8f8f"/><rect x="397.39" y="966" width="14.4" height="32" fill="#8f8f8f"/><rect x="413.01" y="966" width="14.4" height="32" fill="#8f8f8f"/><rect x="428.63" y="966" width="14.4" height="32" fill="#8f8f8f"/><rect x="444.24" y="966" width="14.4" height="32" fill="#8f8f8f"/><rect x="459.86" y="966" width="14.4" height="32" fill="#8f8f8f"/><rect x="475.48" y="966" width="14.4" height="32" fill="#8f8f8f"/><rect x="491.09" y="966" width="14.4" height="32" fill="#8f8f8f"/><rect x="506.71" y="966" width="14.4" height="32" fill="#8f8f8f"/><rect x="522.32" y="966" width="14.4" height="32" fill="#8f8f8f"/><rect x="537.94" y="966" width="14.4" height="32" fill="#8f8f8f"/><rect x="553.56" y="966" width="14.4" height="32" fill="#8f8f8f"/><rect x="569.17" y="966" width="14.4" height="32" fill="#8f8f8f"/><rect x="584.79" y="966" width="14.4" height="32" fill="#8f8f8f"/><rect x="600.41" y="966" width="14.4" height="32" fill="#8f8f8f"/><rect x="616.02" y="966" width="14.4" height="32" fill="#8f8f8f"/><rect x="631.64" y="966" width="14.4" height="32" fill="#8f8f8f"/><rect x="647.25" y="966" width="14.4" height="32" fill="#8f8f8f"/><rect x="662.87" y="966" width="14.4" height="32" fill="#8f8f8f"/><rect x="678.49" y="966" width="14.4" height="32" fill="#8f8f8f"/><rect x="694.10" y="966" width="14.4" height="32" fill="#8f8f8f"/><rect x="709.72" y="966" width="14.4" height="32" fill="#8f8f8f"/><rect x="725.34" y="966" width="14.4" height="32" fill="#8f8f8f"/><rect x="740.95" y="966" width="14.4" height="32" fill="#8f8f8f"/><rect x="756.57" y="966" width="14.4" height="32" fill="#8f8f8f"/><rect x="772.18" y="966" width="14.4" height="32" fill="#8f8f8f"/><rect x="787.80" y="966" width="14.4" height="32" fill="#8f8f8f"/><rect x="803.42" y="966" width="14.4" height="32" fill="#8f8f8f"/><rect x="819.03" y="966" width="14.4" height="32" fill="#8f8f8f"/><rect x="834.65" y="966" width="14.4" height="32" fill="#8f8f8f"/><rect x="850.26" y="966" width="14.4" height="32" fill="#8f8f8f"/><rect x="865.88" y="966" width="14.4" height="32" fill="#8f8f8f"/><rect x="881.50" y="966" width="14.4" height="32" fill="#8f8f8f"/><rect x="897.11" y="966" width="14.4" height="32" fill="#8f8f8f"/><rect x="912.73" y="966" width="14.4" height="32" fill="#8f8f8f"/><rect x="928.35" y="966" width="14.4" height="32" fill="#8f8f8f"/><rect x="943.96" y="966" width="14.4" height="32" fill="#8f8f8f"/><rect x="959.58" y="966" width="14.4" height="32" fill="#8f8f8f"/><rect x="975.19" y="966" width="14.4" height="32" fill="#8f8f8f"/><rect x="990.81" y="966" width="14.4" height="32" fill="#8f8f8f"/><rect x="1006.43" y="966" width="14.4" height="32" fill="#8f8f8f"/><rect x="1022.04" y="966" width="14.4" height="32" fill="#8f8f8f"/><rect x="1037.66" y="966" width="14.4" height="32" fill="#8f8f8f"/><rect x="1053.28" y="966" width="14.4" height="32" fill="#8f8f8f"/><rect x="1068.89" y="966" width="14.4" height="32" fill="#8f8f8f"/><rect x="1084.51" y="966" width="14.4" height="32" fill="#8f8f8f"/><rect x="1100.12" y="966" width="14.4" height="32" fill="#8f8f8f"/><rect x="1115.74" y="966" width="14.4" height="32" fill="#8f8f8f"/><rect x="1131.36" y="966" width="14.4" height="32" fill="#8f8f8f"/><rect x="1146.97" y="966" width="14.4" height="32" fill="#8f8f8f"/><rect x="1162.59" y="966" width="14.4" height="32" fill="#8f8f8f"/><rect x="1178.21" y="966" width="14.4" height="32" fill="#8f8f8f"/><rect x="1193.82" y="966" width="14.4" height="32" fill="#8f8f8f"/><rect x="1209.44" y="966" width="14.4" height="32" fill="#8f8f8f"/><rect x="1225.05" y="966" width="14.4" height="32" fill="#8f8f8f"/><rect x="1240.67" y="966" width="14.4" height="32" fill="#8f8f8f"/><rect x="1256.29" y="966" width="14.4" height="32" fill="#8f8f8f"/><rect x="1271.90" y="966" width="14.4" height="32" fill="#8f8f8f"/><rect x="1287.52" y="966" width="14.4" height="32" fill="#8f8f8f"/><rect x="1303.14" y="966" width="14.4" height="32" fill="#8f8f8f"/><rect x="1318.75" y="966" width="14.4" height="32" fill="#8f8f8f"/><rect x="1334.37" y="966" width="14.4" height="32" fill="#8f8f8f"/><rect x="1349.98" y="966" width="14.4" height="32" fill="#8f8f8f"/><rect x="1365.60" y="966" width="14.4" height="32" fill="#8f8f8f"/><rect x="218.36" y="965.5" width="10.6" height="23.4" fill="#2f3238"/><rect x="236.58" y="965.5" width="10.6" height="23.4" fill="#2f3238"/><rect x="263.91" y="965.5" width="10.6" height="23.4" fill="#2f3238"/><rect x="282.13" y="965.5" width="10.6" height="23.4" fill="#2f3238"/><rect x="300.35" y="965.5" width="10.6" height="23.4" fill="#2f3238"/><rect x="327.68" y="965.5" width="10.6" height="23.4" fill="#2f3238"/><rect x="345.90" y="965.5" width="10.6" height="23.4" fill="#2f3238"/><rect x="373.22" y="965.5" width="10.6" height="23.4" fill="#2f3238"/><rect x="391.44" y="965.5" width="10.6" height="23.4" fill="#2f3238"/><rect x="409.66" y="965.5" width="10.6" height="23.4" fill="#2f3238"/><rect x="436.99" y="965.5" width="10.6" height="23.4" fill="#2f3238"/><rect x="455.21" y="965.5" width="10.6" height="23.4" fill="#2f3238"/><rect x="482.54" y="965.5" width="10.6" height="23.4" fill="#2f3238"/><rect x="500.76" y="965.5" width="10.6" height="23.4" fill="#2f3238"/><rect x="518.98" y="965.5" width="10.6" height="23.4" fill="#2f3238"/><rect x="546.30" y="965.5" width="10.6" height="23.4" fill="#2f3238"/><rect x="564.52" y="965.5" width="10.6" height="23.4" fill="#2f3238"/><rect x="591.85" y="965.5" width="10.6" height="23.4" fill="#2f3238"/><rect x="610.07" y="965.5" width="10.6" height="23.4" fill="#2f3238"/><rect x="628.29" y="965.5" width="10.6" height="23.4" fill="#2f3238"/><rect x="655.62" y="965.5" width="10.6" height="23.4" fill="#2f3238"/><rect x="673.84" y="965.5" width="10.6" height="23.4" fill="#2f3238"/><rect x="701.17" y="965.5" width="10.6" height="23.4" fill="#2f3238"/><rect x="719.38" y="965.5" width="10.6" height="23.4" fill="#2f3238"/><rect x="737.60" y="965.5" width="10.6" height="23.4" fill="#2f3238"/><rect x="764.93" y="965.5" width="10.6" height="23.4" fill="#2f3238"/><rect x="783.15" y="965.5" width="10.6" height="23.4" fill="#2f3238"/><rect x="810.48" y="965.5" width="10.6" height="23.4" fill="#2f3238"/><rect x="828.70" y="965.5" width="10.6" height="23.4" fill="#2f3238"/><rect x="846.92" y="965.5" width="10.6" height="23.4" fill="#2f3238"/><rect x="874.25" y="965.5" width="10.6" height="23.4" fill="#2f3238"/><rect x="892.46" y="965.5" width="10.6" height="23.4" fill="#2f3238"/><rect x="919.79" y="965.5" width="10.6" height="23.4" fill="#2f3238"/><rect x="938.01" y="965.5" width="10.6" height="23.4" fill="#2f3238"/><rect x="956.23" y="965.5" width="10.6" height="23.4" fill="#2f3238"/><rect x="983.56" y="965.5" width="10.6" height="23.4" fill="#2f3238"/><rect x="1001.78" y="965.5" width="10.6" height="23.4" fill="#2f3238"/><rect x="1029.11" y="965.5" width="10.6" height="23.4" fill="#2f3238"/><rect x="1047.33" y="965.5" width="10.6" height="23.4" fill="#2f3238"/><rect x="1065.54" y="965.5" width="10.6" height="23.4" fill="#2f3238"/><rect x="1092.87" y="965.5" width="10.6" height="23.4" fill="#2f3238"/><rect x="1111.09" y="965.5" width="10.6" height="23.4" fill="#2f3238"/><rect x="1138.42" y="965.5" width="10.6" height="23.4" fill="#2f3238"/><rect x="1156.64" y="965.5" width="10.6" height="23.4" fill="#2f3238"/><rect x="1174.86" y="965.5" width="10.6" height="23.4" fill="#2f3238"/><rect x="1202.19" y="965.5" width="10.6" height="23.4" fill="#2f3238"/><rect x="1220.40" y="965.5" width="10.6" height="23.4" fill="#2f3238"/><rect x="1247.73" y="965.5" width="10.6" height="23.4" fill="#2f3238"/><rect x="1265.95" y="965.5" width="10.6" height="23.4" fill="#2f3238"/><rect x="1284.17" y="965.5" width="10.6" height="23.4" fill="#2f3238"/><rect x="1311.50" y="965.5" width="10.6" height="23.4" fill="#2f3238"/><rect x="1329.72" y="965.5" width="10.6" height="23.4" fill="#2f3238"/><rect x="1357.05" y="965.5" width="10.6" height="23.4" fill="#2f3238"/><text x="211.10" y="993.8" font-size="7.5" fill="#444" font-family="Liberation Sans, sans-serif">C-2</text><text x="320.41" y="993.8" font-size="7.5" fill="#444" font-family="Liberation Sans, sans-serif">C-1</text><text x="429.73" y="993.8" font-size="7.5" fill="#444" font-family="Liberation Sans, sans-serif">C0</text><text x="539.04" y="993.8" font-size="7.5" fill="#444" font-family="Liberation Sans, sans-serif">C1</text><text x="648.35" y="993.8" font-size="7.5" fill="#444" font-family="Liberation Sans, sans-serif">C2</text><text x="757.67" y="993.8" font-size="7.5" fill="#444" font-family="Liberation Sans, sans-serif">C3</text><text x="866.98" y="993.8" font-size="7.5" fill="#444" font-family="Liberation Sans, sans-serif">C4</text><text x="976.29" y="993.8" font-size="7.5" fill="#444" font-family="Liberation Sans, sans-serif">C5</text><text x="1085.61" y="993.8" font-size="7.5" fill="#444" font-family="Liberation Sans, sans-serif">C6</text><text x="1194.92" y="993.8" font-size="7.5" fill="#444" font-family="Liberation Sans, sans-serif">C7</text><text x="1304.24" y="993.8" font-size="7.5" fill="#444" font-family="Liberation Sans, sans-serif">C8</text><rect x="210.00" y="1008" width="14.4" height="32" fill="#8f8f8f"/><rect x="225.62" y="1008" width="14.4" height="32" fill="#8f8f8f"/><rect x="241.23" y="1008" width="14.4" height="32" fill="#8f8f8f"/><rect x="256.85" y="1008" width="14.4" height="32" fill="#8f8f8f"/><rect x="272.46" y="1008" width="14.4" height="32" fill="#8f8f8f"/><rect x="288.08" y="1008" width="14.4" height="32" fill="#8f8f8f"/><rect x="303.70" y="1008" width="14.4" height="32" fill="#8f8f8f"/><rect x="319.31" y="1008" width="14.4" height="32" fill="#8f8f8f"/><rect x="334.93" y="1008" width="14.4" height="32" fill="#8f8f8f"/><rect x="350.55" y="1008" width="14.4" height="32" fill="#8f8f8f"/><rect x="366.16" y="1008" width="14.4" height="32" fill="#8f8f8f"/><rect x="381.78" y="1008" width="14.4" height="32" fill="#8f8f8f"/><rect x="397.39" y="1008" width="14.4" height="32" fill="#8f8f8f"/><rect x="413.01" y="1008" width="14.4" height="32" fill="#8f8f8f"/><rect x="428.63" y="1008" width="14.4" height="32" fill="#8f8f8f"/><rect x="444.24" y="1008" width="14.4" height="32" fill="#8f8f8f"/><rect x="459.86" y="1008" width="14.4" height="32" fill="#8f8f8f"/><rect x="475.48" y="1008" width="14.4" height="32" fill="#8f8f8f"/><rect x="491.09" y="1008" width="14.4" height="32" fill="#8f8f8f"/><rect x="506.71" y="1008" width="14.4" height="32" fill="#8f8f8f"/><rect x="522.32" y="1008" width="14.4" height="32" fill="#8f8f8f"/><rect x="537.94" y="1008" width="14.4" height="32" fill="#8f8f8f"/><rect x="553.56" y="1008" width="14.4" height="32" fill="#8f8f8f"/><rect x="569.17" y="1008" width="14.4" height="32" fill="#8f8f8f"/><rect x="584.79" y="1008" width="14.4" height="32" fill="#8f8f8f"/><rect x="600.41" y="1008" width="14.4" height="32" fill="#8f8f8f"/><rect x="616.02" y="1008" width="14.4" height="32" fill="#8f8f8f"/><rect x="631.64" y="1008" width="14.4" height="32" fill="#8f8f8f"/><rect x="647.25" y="1008" width="14.4" height="32" fill="#8f8f8f"/><rect x="662.87" y="1008" width="14.4" height="32" fill="#8f8f8f"/><rect x="678.49" y="1008" width="14.4" height="32" fill="#8f8f8f"/><rect x="694.10" y="1008" width="14.4" height="32" fill="#8f8f8f"/><rect x="709.72" y="1008" width="14.4" height="32" fill="#8f8f8f"/><rect x="725.34" y="1008" width="14.4" height="32" fill="#8f8f8f"/><rect x="740.95" y="1008" width="14.4" height="32" fill="#8f8f8f"/><rect x="756.57" y="1008" width="14.4" height="32" fill="#8f8f8f"/><rect x="772.18" y="1008" width="14.4" height="32" fill="#8f8f8f"/><rect x="787.80" y="1008" width="14.4" height="32" fill="#8f8f8f"/><rect x="803.42" y="1008" width="14.4" height="32" fill="#8f8f8f"/><rect x="819.03" y="1008" width="14.4" height="32" fill="#8f8f8f"/><rect x="834.65" y="1008" width="14.4" height="32" fill="#8f8f8f"/><rect x="850.26" y="1008" width="14.4" height="32" fill="#8f8f8f"/><rect x="865.88" y="1008" width="14.4" height="32" fill="#8f8f8f"/><rect x="881.50" y="1008" width="14.4" height="32" fill="#8f8f8f"/><rect x="897.11" y="1008" width="14.4" height="32" fill="#8f8f8f"/><rect x="912.73" y="1008" width="14.4" height="32" fill="#8f8f8f"/><rect x="928.35" y="1008" width="14.4" height="32" fill="#8f8f8f"/><rect x="943.96" y="1008" width="14.4" height="32" fill="#8f8f8f"/><rect x="959.58" y="1008" width="14.4" height="32" fill="#8f8f8f"/><rect x="975.19" y="1008" width="14.4" height="32" fill="#8f8f8f"/><rect x="990.81" y="1008" width="14.4" height="32" fill="#8f8f8f"/><rect x="1006.43" y="1008" width="14.4" height="32" fill="#8f8f8f"/><rect x="1022.04" y="1008" width="14.4" height="32" fill="#8f8f8f"/><rect x="1037.66" y="1008" width="14.4" height="32" fill="#8f8f8f"/><rect x="1053.28" y="1008" width="14.4" height="32" fill="#8f8f8f"/><rect x="1068.89" y="1008" width="14.4" height="32" fill="#8f8f8f"/><rect x="1084.51" y="1008" width="14.4" height="32" fill="#8f8f8f"/><rect x="1100.12" y="1008" width="14.4" height="32" fill="#8f8f8f"/><rect x="1115.74" y="1008" width="14.4" height="32" fill="#8f8f8f"/><rect x="1131.36" y="1008" width="14.4" height="32" fill="#8f8f8f"/><rect x="1146.97" y="1008" width="14.4" height="32" fill="#8f8f8f"/><rect x="1162.59" y="1008" width="14.4" height="32" fill="#8f8f8f"/><rect x="1178.21" y="1008" width="14.4" height="32" fill="#8f8f8f"/><rect x="1193.82" y="1008" width="14.4" height="32" fill="#8f8f8f"/><rect x="1209.44" y="1008" width="14.4" height="32" fill="#8f8f8f"/><rect x="1225.05" y="1008" width="14.4" height="32" fill="#8f8f8f"/><rect x="1240.67" y="1008" width="14.4" height="32" fill="#8f8f8f"/><rect x="1256.29" y="1008" width="14.4" height="32" fill="#8f8f8f"/><rect x="1271.90" y="1008" width="14.4" height="32" fill="#8f8f8f"/><rect x="1287.52" y="1008" width="14.4" height="32" fill="#8f8f8f"/><rect x="1303.14" y="1008" width="14.4" height="32" fill="#8f8f8f"/><rect x="1318.75" y="1008" width="14.4" height="32" fill="#8f8f8f"/><rect x="1334.37" y="1008" width="14.4" height="32" fill="#8f8f8f"/><rect x="1349.98" y="1008" width="14.4" height="32" fill="#8f8f8f"/><rect x="1365.60" y="1008" width="14.4" height="32" fill="#8f8f8f"/><rect x="218.36" y="1007.5" width="10.6" height="23.4" fill="#2f3238"/><rect x="236.58" y="1007.5" width="10.6" height="23.4" fill="#2f3238"/><rect x="263.91" y="1007.5" width="10.6" height="23.4" fill="#2f3238"/><rect x="282.13" y="1007.5" width="10.6" height="23.4" fill="#2f3238"/><rect x="300.35" y="1007.5" width="10.6" height="23.4" fill="#2f3238"/><rect x="327.68" y="1007.5" width="10.6" height="23.4" fill="#2f3238"/><rect x="345.90" y="1007.5" width="10.6" height="23.4" fill="#2f3238"/><rect x="373.22" y="1007.5" width="10.6" height="23.4" fill="#2f3238"/><rect x="391.44" y="1007.5" width="10.6" height="23.4" fill="#2f3238"/><rect x="409.66" y="1007.5" width="10.6" height="23.4" fill="#2f3238"/><rect x="436.99" y="1007.5" width="10.6" height="23.4" fill="#2f3238"/><rect x="455.21" y="1007.5" width="10.6" height="23.4" fill="#2f3238"/><rect x="482.54" y="1007.5" width="10.6" height="23.4" fill="#2f3238"/><rect x="500.76" y="1007.5" width="10.6" height="23.4" fill="#2f3238"/><rect x="518.98" y="1007.5" width="10.6" height="23.4" fill="#2f3238"/><rect x="546.30" y="1007.5" width="10.6" height="23.4" fill="#2f3238"/><rect x="564.52" y="1007.5" width="10.6" height="23.4" fill="#2f3238"/><rect x="591.85" y="1007.5" width="10.6" height="23.4" fill="#2f3238"/><rect x="610.07" y="1007.5" width="10.6" height="23.4" fill="#2f3238"/><rect x="628.29" y="1007.5" width="10.6" height="23.4" fill="#2f3238"/><rect x="655.62" y="1007.5" width="10.6" height="23.4" fill="#2f3238"/><rect x="673.84" y="1007.5" width="10.6" height="23.4" fill="#2f3238"/><rect x="701.17" y="1007.5" width="10.6" height="23.4" fill="#2f3238"/><rect x="719.38" y="1007.5" width="10.6" height="23.4" fill="#2f3238"/><rect x="737.60" y="1007.5" width="10.6" height="23.4" fill="#2f3238"/><rect x="764.93" y="1007.5" width="10.6" height="23.4" fill="#2f3238"/><rect x="783.15" y="1007.5" width="10.6" height="23.4" fill="#2f3238"/><rect x="810.48" y="1007.5" width="10.6" height="23.4" fill="#2f3238"/><rect x="828.70" y="1007.5" width="10.6" height="23.4" fill="#2f3238"/><rect x="846.92" y="1007.5" width="10.6" height="23.4" fill="#2f3238"/><rect x="874.25" y="1007.5" width="10.6" height="23.4" fill="#2f3238"/><rect x="892.46" y="1007.5" width="10.6" height="23.4" fill="#2f3238"/><rect x="919.79" y="1007.5" width="10.6" height="23.4" fill="#2f3238"/><rect x="938.01" y="1007.5" width="10.6" height="23.4" fill="#2f3238"/><rect x="956.23" y="1007.5" width="10.6" height="23.4" fill="#2f3238"/><rect x="983.56" y="1007.5" width="10.6" height="23.4" fill="#2f3238"/><rect x="1001.78" y="1007.5" width="10.6" height="23.4" fill="#2f3238"/><rect x="1029.11" y="1007.5" width="10.6" height="23.4" fill="#2f3238"/><rect x="1047.33" y="1007.5" width="10.6" height="23.4" fill="#2f3238"/><rect x="1065.54" y="1007.5" width="10.6" height="23.4" fill="#2f3238"/><rect x="1092.87" y="1007.5" width="10.6" height="23.4" fill="#2f3238"/><rect x="1111.09" y="1007.5" width="10.6" height="23.4" fill="#2f3238"/><rect x="1138.42" y="1007.5" width="10.6" height="23.4" fill="#2f3238"/><rect x="1156.64" y="1007.5" width="10.6" height="23.4" fill="#2f3238"/><rect x="1174.86" y="1007.5" width="10.6" height="23.4" fill="#2f3238"/><rect x="1202.19" y="1007.5" width="10.6" height="23.4" fill="#2f3238"/><rect x="1220.40" y="1007.5" width="10.6" height="23.4" fill="#2f3238"/><rect x="1247.73" y="1007.5" width="10.6" height="23.4" fill="#2f3238"/><rect x="1265.95" y="1007.5" width="10.6" height="23.4" fill="#2f3238"/><rect x="1284.17" y="1007.5" width="10.6" height="23.4" fill="#2f3238"/><rect x="1311.50" y="1007.5" width="10.6" height="23.4" fill="#2f3238"/><rect x="1329.72" y="1007.5" width="10.6" height="23.4" fill="#2f3238"/><rect x="1357.05" y="1007.5" width="10.6" height="23.4" fill="#2f3238"/><text x="211.10" y="1035.8" font-size="7.5" fill="#444" font-family="Liberation Sans, sans-serif">C-2</text><text x="320.41" y="1035.8" font-size="7.5" fill="#444" font-family="Liberation Sans, sans-serif">C-1</text><text x="429.73" y="1035.8" font-size="7.5" fill="#444" font-family="Liberation Sans, sans-serif">C0</text><text x="539.04" y="1035.8" font-size="7.5" fill="#444" font-family="Liberation Sans, sans-serif">C1</text><text x="648.35" y="1035.8" font-size="7.5" fill="#444" font-family="Liberation Sans, sans-serif">C2</text><text x="757.67" y="1035.8" font-size="7.5" fill="#444" font-family="Liberation Sans, sans-serif">C3</text><text x="866.98" y="1035.8" font-size="7.5" fill="#444" font-family="Liberation Sans, sans-serif">C4</text><text x="976.29" y="1035.8" font-size="7.5" fill="#444" font-family="Liberation Sans, sans-serif">C5</text><text x="1085.61" y="1035.8" font-size="7.5" fill="#444" font-family="Liberation Sans, sans-serif">C6</text><text x="1194.92" y="1035.8" font-size="7.5" fill="#444" font-family="Liberation Sans, sans-serif">C7</text><text x="1304.24" y="1035.8" font-size="7.5" fill="#444" font-family="Liberation Sans, sans-serif">C8</text><rect x="537.94" y="966" width="108.51" height="32" fill="#4470b8" opacity="0.32"/></svg>
<div style="left:7.500px;top:1056px;line-height:20px;color:#9a9a9a;font-size:11px;">Phrase 6: Click to switch to phrase and view in editor. Right click for more options</div>
</body></html>
